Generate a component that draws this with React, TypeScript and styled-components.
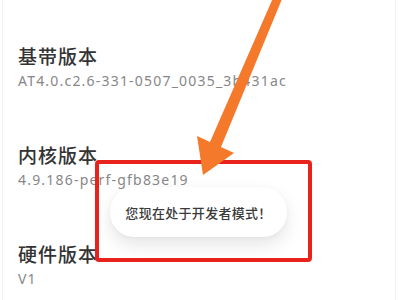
import React from "react";
import styled, { createGlobalStyle } from "styled-components";

const Global = createGlobalStyle`
  html, body { margin: 0; padding: 0; background: #ffffff; }
  body { width: 400px; height: 300px; overflow: hidden; }
`;

const Screen = styled.div`
  position: relative;
  width: 400px;
  height: 300px;
  overflow: hidden;
  background: #ffffff;
  font-family: "Noto Sans", "Noto Sans CJK SC", sans-serif;
`;

const Card = styled.div`
  box-sizing: border-box;
  margin: -14px 4px 0 2px;
  height: 330px;
  border: 1px solid #f1f1f1;
  border-radius: 16px;
  display: flex;
  flex-direction: column;
  gap: 54px;
  padding: 57px 0 0 15px;
`;

const Item = styled.div`
  display: flex;
  flex-direction: column;
  gap: 5px;
`;

const Title = styled.div`
  font-family: "Noto Sans CJK SC", sans-serif;
  font-weight: 500;
  font-size: 19px;
  letter-spacing: 1px;
  line-height: 24px;
  color: #333333;
`;

const Value = styled.div`
  font-family: "Noto Sans", "Noto Sans CJK SC", sans-serif;
  font-size: 14px;
  line-height: 16px;
  letter-spacing: 1.2px;
  color: #878787;
`;

const Highlight = styled.div`
  position: absolute;
  left: 95px;
  top: 160px;
  width: 217px;
  height: 102px;
  box-sizing: border-box;
  border: 4px solid #e8231b;
  border-radius: 4px;
`;

const Toast = styled.div`
  position: absolute;
  left: 110px;
  top: 187px;
  width: 177px;
  height: 50px;
  border-radius: 24px;
  background: #ffffff;
  box-shadow: 0 8px 18px rgba(0, 0, 0, 0.1), 0 1px 4px rgba(0, 0, 0, 0.04);
  display: flex;
  align-items: center;
  justify-content: center;
  font-family: "Noto Sans CJK SC", sans-serif;
  font-weight: 500;
  font-size: 13px;
  letter-spacing: 0.3px;
  color: #3a3a3a;
`;

const ArrowSvg = styled.svg`
  position: absolute;
  left: 0;
  top: 0;
  width: 400px;
  height: 300px;
  pointer-events: none;
`;

export default function App() {
  return (
    <Screen>
      <Global />
      <Card>
        <Item>
          <Title>基带版本</Title>
          <Value>AT4.0.c2.6-331-0507_0035_3b431ac</Value>
        </Item>
        <Item>
          <Title>内核版本</Title>
          <Value>4.9.186-perf-gfb83e19</Value>
        </Item>
        <Item>
          <Title>硬件版本</Title>
          <Value>V1</Value>
        </Item>
      </Card>
      <Highlight />
      <Toast>您现在处于开发者模式！</Toast>
      <ArrowSvg viewBox="0 0 400 300">
        <polygon
          points="273,-2 282,-1 221,147 234,153 203,175 197,136 210,142"
          fill="#f5792b"
        />
      </ArrowSvg>
    </Screen>
  );
}
